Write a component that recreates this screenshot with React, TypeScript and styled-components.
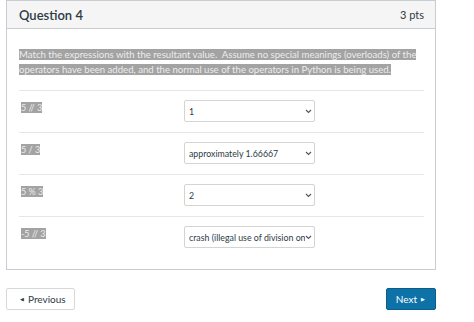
import React from 'react'
import styled, { createGlobalStyle } from 'styled-components'

const GlobalStyle = createGlobalStyle`
  body {
    margin: 0;
    background: #fff;
    font-family: Lato, "Liberation Sans", sans-serif;
    color: #2d3b45;
  }
`

const rows = [
  { expr: '5 // 3', answer: '1' },
  { expr: '5 / 3', answer: 'approximately 1.66667' },
  { expr: '5 % 3', answer: '2' },
  { expr: '-5 // 3', answer: 'crash (illegal use of division on negatives)' },
]

function Chevron() {
  return (
    <svg width="7" height="5" viewBox="0 0 7 5">
      <path d="M1 1l2.5 2.5L6 1" fill="none" stroke="#555" strokeWidth="1.1" />
    </svg>
  )
}

export default function App() {
  return (
    <Page>
      <GlobalStyle />
      <Card>
        <Header>
          <Title>Question 4</Title>
          <Points>3 pts</Points>
        </Header>
        <Body>
          <Prompt>
            <Selected>
              Match the expressions with the resultant value.&nbsp; Assume no special meanings
              (overloads) of the operators have been added, and the normal use of the operators in
              Python is being used.
            </Selected>
          </Prompt>
          <Answers>
            {rows.map((r) => (
              <Row key={r.expr}>
                <Expr>
                  <Selected>{r.expr}</Selected>
                </Expr>
                <SelectBox>
                  <SelectText>{r.answer}</SelectText>
                  <Chevron />
                </SelectBox>
              </Row>
            ))}
          </Answers>
        </Body>
      </Card>
      <Footer>
        <Button>
          <Tri>◀</Tri> Previous
        </Button>
        <Button primary>
          Next <Tri>▶</Tri>
        </Button>
      </Footer>
    </Page>
  )
}

const Page = styled.div`
  width: 474px;
  padding: 0 38px 0 6px;
  box-sizing: border-box;
`

const Card = styled.div`
  border: 1px solid #c7cdd1;
  background: #fff;
`

const Header = styled.div`
  display: flex;
  justify-content: space-between;
  align-items: center;
  height: 27px;
  padding: 0 11px 0 12px;
  background: #f5f5f5;
  border-bottom: 1px solid #c7cdd1;
`

const Title = styled.div`
  font-size: 13px;
  font-weight: 600;
  color: #2d3b45;
`

const Points = styled.div`
  font-size: 11px;
  color: #2d3b45;
`

const Body = styled.div`
  padding: 18px 11px 11px 12px;
`

const Prompt = styled.p`
  margin: 0 0 13px;
  font-size: 9.6px;
  line-height: 15px;
`

const Selected = styled.span`
  background: #a3a3a3;
  color: #ececec;
`

const Answers = styled.div`
  border-top: 1px solid #e6e6e6;
`

const Row = styled.div`
  display: flex;
  align-items: flex-start;
  padding: 9px 0 10px;
  border-top: 1px solid #e6e6e6;

  &:first-child {
    border-top: none;
  }
`

const Expr = styled.div`
  width: 163px;
  flex-shrink: 0;
  padding: 3px 0 0 2px;
  font-size: 9px;
  line-height: 10px;
`

const SelectBox = styled.div`
  display: flex;
  align-items: center;
  width: 131px;
  height: 22px;
  box-sizing: border-box;
  padding: 0 2px 0 4px;
  border: 1px solid #d4d4d4;
  border-radius: 2px;
  background: #fff;
`

const SelectText = styled.span`
  flex: 1;
  overflow: hidden;
  white-space: nowrap;
  font-size: 8.8px;
  color: #2d3b45;
`

const Footer = styled.div`
  display: flex;
  justify-content: space-between;
  margin-top: 18px;
`

const Button = styled.div<{ primary?: boolean }>`
  display: flex;
  align-items: center;
  gap: 4px;
  height: 22px;
  box-sizing: border-box;
  padding: 0 ${({ primary }) => (primary ? '10px 0 9px' : '8px 0 13px')};
  font-size: 10px;
  border-radius: 2px;
  border: 1px solid ${({ primary }) => (primary ? '#0c5e88' : '#d6d9db')};
  background: ${({ primary }) => (primary ? '#0d72a7' : '#fff')};
  color: ${({ primary }) => (primary ? '#fff' : '#2d3b45')};
`

const Tri = styled.span`
  font-size: 5px;
`
